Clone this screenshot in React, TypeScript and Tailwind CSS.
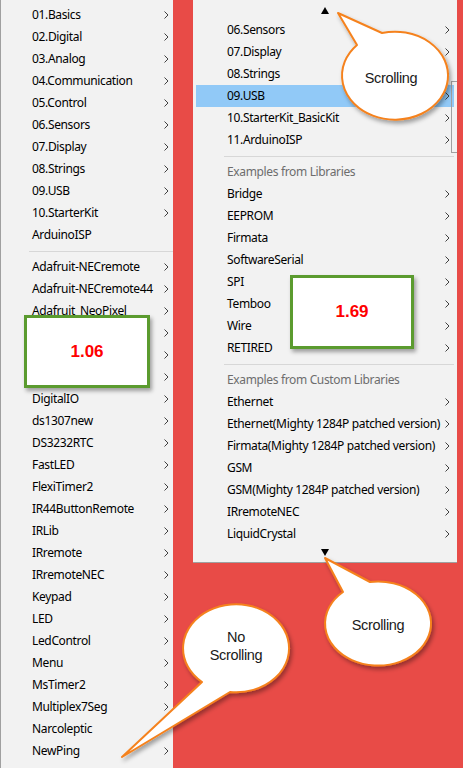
const leftTop = [
  "01.Basics",
  "02.Digital",
  "03.Analog",
  "04.Communication",
  "05.Control",
  "06.Sensors",
  "07.Display",
  "08.Strings",
  "09.USB",
  "10.StarterKit",
];

// library examples; entries without a submenu have no arrow.
// three rows sit under the 1.06 tile, so only their arrows show
const leftLibs: [string, boolean][] = [
  ["Adafruit-NECremote", true],
  ["Adafruit-NECremote44", true],
  ["Adafruit_NeoPixel", true],
  ["", true],
  ["", true],
  ["", true],
  ["DigitalIO", true],
  ["ds1307new", true],
  ["DS3232RTC", true],
  ["FastLED", true],
  ["FlexiTimer2", true],
  ["IR44ButtonRemote", true],
  ["IRLib", true],
  ["IRremote", true],
  ["IRremoteNEC", true],
  ["Keypad", true],
  ["LED", true],
  ["LedControl", true],
  ["Menu", true],
  ["MsTimer2", true],
  ["Multiplex7Seg", true],
  ["Narcoleptic", false],
  ["NewPing", true],
];

const rightTop = [
  "06.Sensors",
  "07.Display",
  "08.Strings",
  "09.USB",
  "10.StarterKit_BasicKit",
  "11.ArduinoISP",
];

const rightLibs = [
  "Bridge",
  "EEPROM",
  "Firmata",
  "SoftwareSerial",
  "SPI",
  "Temboo",
  "Wire",
  "RETIRED",
];

const rightCustom = [
  "Ethernet",
  "Ethernet(Mighty 1284P patched version)",
  "Firmata(Mighty 1284P patched version)",
  "GSM",
  "GSM(Mighty 1284P patched version)",
  "IRremoteNEC",
  "LiquidCrystal",
];

const Chevron = () => (
  <svg width="5" height="8" viewBox="0 0 5 8" className="shrink-0">
    <polyline points="0.5,0.5 4,4 0.5,7.5" fill="none" stroke="#404040" strokeWidth="1" />
  </svg>
);

interface RowProps {
  label: string;
  arrow?: boolean;
  active?: boolean;
  muted?: boolean;
}

const Row = ({ label, arrow = true, active = false, muted = false }: RowProps) => (
  <div
    className={`flex h-[22px] items-center pl-[31px] pr-[4px] whitespace-nowrap ${
      active ? "bg-[#91c9f7]" : ""
    }`}
  >
    <span className={`flex-1 ${muted ? "text-[#6d6d6d]" : "text-black"}`}>{label}</span>
    {arrow && !muted && <Chevron />}
  </div>
);

const Separator = () => (
  <div className="flex h-[10px] items-center pl-[28px]">
    <div className="h-px w-full bg-[#d7d7d7]" />
  </div>
);

const ValueTile = ({ value, className }: { value: string; className: string }) => (
  <div
    className={`absolute flex items-center justify-center border-[3px] border-[#5b9b2f] bg-white shadow-[2px_3px_4px_rgba(0,0,0,0.35)] ${className}`}
  >
    <span className="font-['Liberation_Sans',Arial,sans-serif] text-[17px] font-bold tracking-normal text-[#ff0000]">
      {value}
    </span>
  </div>
);

// speech bubbles drawn over both menus
const Callouts = () => (
  <svg className="pointer-events-none absolute inset-0" width="463" height="768" viewBox="0 0 463 768">
    <defs>
      <filter id="bubbleShadow" x="-20%" y="-20%" width="140%" height="140%">
        <feDropShadow dx="2" dy="3" stdDeviation="2" floodColor="#000" floodOpacity="0.35" />
      </filter>
    </defs>
    <g fill="#fff" stroke="#f5821f" strokeWidth="2" strokeLinejoin="round" filter="url(#bubbleShadow)">
      <path d="M 382 33 L 338 13 L 357 45 A 53 44 0 1 0 382 33 Z" />
      <path d="M 370 582 L 325 558 L 343 592 A 53 42 0 1 0 370 582 Z" />
      <path d="M 202 682 L 122 757 L 230 692 A 53 44 0 1 0 202 682 Z" />
    </g>
    <g fill="#1a1a1a" fontFamily="'Liberation Sans', Arial, sans-serif" fontSize="14.5" textAnchor="middle">
      <text x="391" y="83">Scrolling</text>
      <text x="378" y="630">Scrolling</text>
      <text x="236" y="642">No</text>
      <text x="236" y="660">Scrolling</text>
    </g>
  </svg>
);

const App = () => {
  return (
    <div className="relative flex h-[768px] w-[463px] items-start overflow-hidden bg-[#e84b47] font-['Noto_Sans','Open_Sans',sans-serif] text-[12px] tracking-[-0.35px]">
      {/* Menu without scrolling */}
      <div className="h-full w-[173px] shrink-0 border-l border-[#a0a0a0] bg-[#f2f2f2] pt-[4px]">
        {leftTop.map((item) => (
          <Row key={item} label={item} />
        ))}
        <Row label="ArduinoISP" arrow={false} />
        <Separator />
        {leftLibs.map(([item, arrow], i) => (
          <Row key={i} label={item} arrow={arrow} />
        ))}
      </div>

      {/* Scrolling menu */}
      <div className="relative ml-[20px] h-[563px] w-[264px] shrink-0 border-b border-[#a0a0a0] bg-[#f2f2f2] px-[3px]">
        <div className="flex h-[19px] items-center justify-center pt-[2px]">
          <div className="h-0 w-0 border-x-[4px] border-b-[7px] border-x-transparent border-b-black" />
        </div>
        {rightTop.map((item) => (
          <Row key={item} label={item} active={item === "09.USB"} />
        ))}
        <Separator />
        <Row label="Examples from Libraries" muted />
        {rightLibs.map((item) => (
          <Row key={item} label={item} />
        ))}
        <Separator />
        <Row label="Examples from Custom Libraries" muted />
        {rightCustom.map((item) => (
          <Row key={item} label={item} />
        ))}
        <div className="flex h-[15px] items-center justify-center">
          <div className="h-0 w-0 border-x-[4px] border-t-[7px] border-x-transparent border-t-black" />
        </div>
        <div className="absolute right-0 top-[81px] h-[72px] w-[6px] border-y border-l border-[#a0a0a0]" />
      </div>

      <ValueTile value="1.06" className="left-[24px] top-[315px] h-[73px] w-[126px]" />
      <ValueTile value="1.69" className="left-[290px] top-[275px] h-[74px] w-[124px]" />

      <Callouts />
    </div>
  );
};

export default App;
